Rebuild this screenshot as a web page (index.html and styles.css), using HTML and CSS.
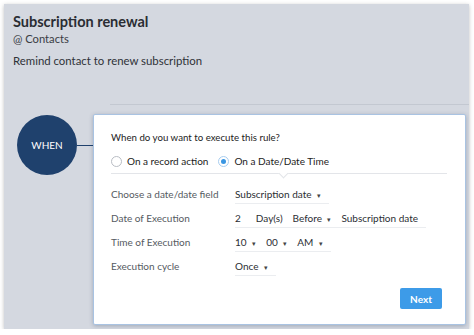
FILE: index.html
```html
<!DOCTYPE html>
<html>
<head>
  <meta charset="UTF-8">
  <title>Subscription renewal</title>
  <link rel="stylesheet" href="styles.css">
</head>
<body>
  <div class="panel">
    <h1>Subscription renewal</h1>
    <div class="module">@ Contacts</div>
    <p class="rule-desc">Remind contact to renew subscription</p>

    <div class="divider"></div>

    <!-- Rule step -->
    <div class="step">
      <div class="step-badge">WHEN</div>
      <div class="connector"></div>

      <div class="card">
        <div class="question">When do you want to execute this rule?</div>
        <div class="options">
          <label class="option"><span class="radio"></span>On a record action</label>
          <label class="option checked"><span class="radio"></span>On a Date/Date Time</label>
        </div>
        <div class="tab-line"><span class="notch"></span></div>

        <div class="form">
          <div class="label">Choose a date/date field</div>
          <div class="field">
            <span class="value">Subscription date <i class="caret">&#9662;</i></span>
          </div>

          <div class="label">Date of Execution</div>
          <div class="field">
            <span class="value num">2</span>
            <span class="value">Day(s)</span>
            <span class="value">Before <i class="caret">&#9662;</i></span>
            <span class="value">Subscription date</span>
          </div>

          <div class="label">Time of Execution</div>
          <div class="field">
            <span class="value">10 <i class="caret">&#9662;</i></span>
            <span class="value">00 <i class="caret">&#9662;</i></span>
            <span class="value">AM <i class="caret">&#9662;</i></span>
          </div>

          <div class="label">Execution cycle</div>
          <div class="field">
            <span class="value">Once <i class="caret">&#9662;</i></span>
          </div>
        </div>

        <div class="actions">
          <button class="next-button">Next</button>
        </div>
      </div>
    </div>
  </div>
</body>
</html>
```

FILE: styles.css
```css
body {
  margin: 0;
  background-color: #ffffff;
  font-family: Lato, "Open Sans", sans-serif;
  color: #333;
}
.panel {
  margin: 4px 0 0 4px;
  width: 465px;
  height: 325px;
  box-sizing: border-box;
  padding: 8px 0 0 9px;
  background-color: #d4d8e0;
  box-shadow: 0 1px 4px rgba(0, 0, 0, 0.25);
}
h1 {
  margin: 0;
  font-size: 14.5px;
  line-height: 20px;
  font-weight: 700;
  color: #2a2d33;
}
.module {
  font-size: 11.2px;
  line-height: 14px;
  color: #3a3d44;
}
.rule-desc {
  margin: 7px 0 0;
  font-size: 11.4px;
  line-height: 15px;
  color: #2f3238;
}
.divider {
  margin: 36px 0 0 97px;
  border-top: 1px solid #c3c8d1;
}
.step {
  display: flex;
  align-items: flex-start;
  margin-top: 9px;
  margin-left: 4px;
}
.step-badge {
  width: 60px;
  height: 60px;
  margin-top: 1px;
  border-radius: 50%;
  background-color: #1f416d;
  color: #ffffff;
  font-size: 10px;
  display: flex;
  align-items: center;
  justify-content: center;
  flex-shrink: 0;
}
.connector {
  width: 16px;
  margin-top: 31px;
  border-top: 1px solid #1f416d;
  flex-shrink: 0;
}
.card {
  width: 373px;
  height: 211px;
  box-sizing: border-box;
  padding: 15px 18px 0 17px;
  background-color: #ffffff;
  border: 1px solid #a9c3e2;
  border-radius: 2px;
  box-shadow: 0 1px 4px rgba(40, 60, 90, 0.3);
}
.question {
  font-size: 9.7px;
  line-height: 14px;
  color: #222;
}
.options {
  display: flex;
  gap: 10px;
  margin-top: 10px;
}
.option {
  display: flex;
  align-items: center;
  font-size: 10px;
  line-height: 14px;
  color: #222;
}
.radio {
  width: 9px;
  height: 9px;
  border: 1px solid #b9bdc4;
  border-radius: 50%;
  margin: 0 5px 0 0;
  box-sizing: content-box;
  position: relative;
}
.option.checked .radio {
  border-color: #a7cdf0;
}
.option.checked .radio::after {
  content: "";
  position: absolute;
  left: 2px;
  top: 2px;
  width: 5px;
  height: 5px;
  border-radius: 50%;
  background-color: #3a96e2;
}
.tab-line {
  position: relative;
  margin-top: 5px;
  border-top: 1px solid #e3e5e9;
}
.notch {
  position: absolute;
  left: 169px;
  top: -4px;
  width: 6px;
  height: 6px;
  background-color: #ffffff;
  border-right: 1px solid #e3e5e9;
  border-bottom: 1px solid #e3e5e9;
  transform: rotate(45deg);
}
.form {
  display: grid;
  grid-template-columns: 124px auto;
  row-gap: 6px;
  margin-top: 12px;
  font-size: 10px;
  line-height: 14px;
}
.label {
  color: #555a61;
  padding-top: 1px;
}
.field {
  display: flex;
  justify-self: start;
  gap: 10px;
  padding: 1px 8px 1px 0;
  border-bottom: 1px solid #ebedf0;
  color: #2b2e33;
}
.value {
  white-space: nowrap;
}
.value.num {
  margin-right: 5px;
}
.caret {
  font-style: normal;
  font-size: 7px;
  margin-left: 3px;
  color: #444;
}
.actions {
  display: flex;
  justify-content: flex-end;
  margin-top: 12px;
  margin-right: 5px;
}
.next-button {
  width: 42px;
  height: 21px;
  padding: 0;
  border: none;
  border-radius: 2px;
  background-color: #3d9be8;
  color: #ffffff;
  font-family: Lato, sans-serif;
  font-size: 10px;
  font-weight: 700;
}
```
